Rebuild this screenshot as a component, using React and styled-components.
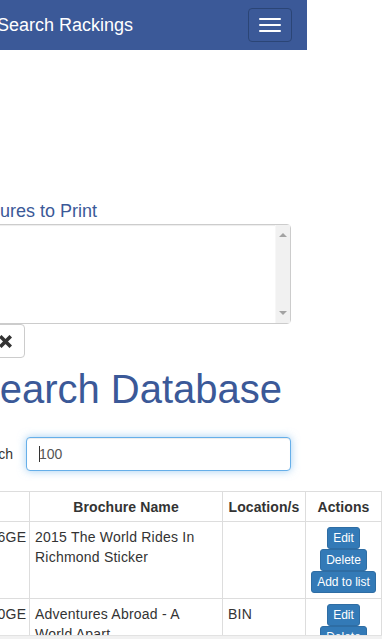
import React from "react";
import styled, { createGlobalStyle } from "styled-components";

const GlobalStyle = createGlobalStyle`
    html, body {
        margin: 0;
        padding: 0;
        overflow: hidden;
        background: #fff;
    }
    body {
        font-family: "Liberation Sans", Arial, sans-serif;
        font-size: 14px;
        line-height: 20px;
        color: #333;
    }
    * {
        box-sizing: border-box;
    }
`;

const Page = styled.div`
    width: 382px;
    height: 639px;
    overflow: hidden;
    position: relative;
`;

const Navbar = styled.nav`
    display: flex;
    align-items: center;
    width: 307px;
    height: 50px;
    background-color: #3b5998;
`;

const Brand = styled.a`
    margin-left: -3px;
    font-size: 18px;
    line-height: 20px;
    color: #fff;
    white-space: nowrap;
`;

const Toggle = styled.button`
    margin-left: auto;
    margin-right: 15px;
    width: 44px;
    height: 34px;
    padding: 0;
    border: 1px solid #2b4576;
    border-radius: 4px;
    background: transparent;
    display: flex;
    flex-direction: column;
    align-items: center;
    justify-content: center;
    gap: 4px;
`;

const Bar = styled.span`
    display: block;
    width: 22px;
    height: 2px;
    border-radius: 1px;
    background: #fff;
`;

const Column = styled.div`
    margin-left: -60px;
    margin-top: 151px;
    width: 351px;
`;

const Label = styled.label`
    display: block;
    margin: 0 0 3px 13px;
    font-size: 18px;
    line-height: 20px;
    color: #3b5998;
    white-space: nowrap;
`;

const TextWrap = styled.div`
    position: relative;
    height: 100px;
`;

const TextArea = styled.textarea`
    display: block;
    width: 100%;
    height: 100px;
    border: 1px solid #ccc;
    border-radius: 4px;
    resize: none;
    overflow: hidden;
    box-shadow: inset 0 1px 1px rgba(0, 0, 0, 0.075);
    font-family: inherit;
`;

const ScrollTrack = styled.div`
    position: absolute;
    top: 1px;
    right: 1px;
    bottom: 1px;
    width: 15px;
    background: #f1f1f1;
    border-left: 1px solid #f7f7f7;
    display: flex;
    flex-direction: column;
    justify-content: space-between;
    align-items: center;
    padding: 8px 0;
`;

const Arrow = styled.span`
    width: 0;
    height: 0;
    border-left: 4px solid transparent;
    border-right: 4px solid transparent;
    ${(p) => (p.down ? "border-top: 4px solid #a3a3a3;" : "border-bottom: 4px solid #a3a3a3;")}
`;

const ClearButton = styled.button`
    display: flex;
    align-items: center;
    justify-content: center;
    margin-left: 46px;
    width: 39px;
    height: 34px;
    padding: 0;
    background: #fff;
    border: 1px solid #ccc;
    border-radius: 4px;
`;

const Heading = styled.h1`
    margin: 9px 0 0 33px;
    font-size: 40px;
    line-height: 44px;
    font-weight: 500;
    color: #3b5998;
    white-space: nowrap;
`;

const SearchRow = styled.div`
    display: flex;
    align-items: center;
    margin: 26px 0 0 28.6px;
`;

const SearchLabel = styled.label`
    margin-right: 13px;
    font-size: 14px;
`;

const InputWrap = styled.div`
    position: relative;
    flex: 1;
`;

const SearchInput = styled.input`
    display: block;
    width: 100%;
    height: 34px;
    padding: 6px 12px;
    font-family: inherit;
    font-size: 14px;
    color: #555;
    border: 1px solid #66afe9;
    border-radius: 4px;
    outline: none;
    box-shadow: inset 0 1px 1px rgba(0, 0, 0, 0.075), 0 0 8px rgba(102, 175, 233, 0.6);
`;

const Caret = styled.span`
    position: absolute;
    left: 13px;
    top: 9px;
    width: 1px;
    height: 16px;
    background: #333;
`;

const TableWrap = styled.div`
    margin: 20px 0 0 -73px;
    width: 454px;
`;

const Table = styled.table`
    width: 100%;
    table-layout: fixed;
    border-collapse: collapse;
    border-spacing: 0;
`;

const Th = styled.th`
    padding: 5px 5px 4px;
    font-weight: bold;
    text-align: center;
    border: 1px solid #ddd;
    white-space: nowrap;
    letter-spacing: 0.1px;
`;

const Td = styled.td`
    padding: 5px;
    vertical-align: top;
    border: 1px solid #ddd;
    letter-spacing: 0.22px;
    white-space: ${(p) => (p.nowrap ? "nowrap" : "normal")};
`;

const Actions = styled.div`
    display: flex;
    flex-direction: column;
    align-items: center;
    letter-spacing: 0;
`;

const SmallButton = styled.button`
    padding: 1px 5px;
    font-family: inherit;
    font-size: 12px;
    line-height: 18px;
    color: #fff;
    background-color: #337ab7;
    border: 1px solid #2e6da4;
    border-radius: 3px;
    white-space: nowrap;
`;

const BottomBar = styled.div`
    position: fixed;
    left: 0;
    right: 0;
    bottom: 0;
    height: 4px;
    background: #f1f1f1;
    border-top: 1px solid #e2e2e2;
`;

const rows = [
    { code: "BRCH0256GE", name: "2015 The World Rides In Richmond Sticker", location: "" },
    { code: "BRCH0100GE", name: "Adventures Abroad - A World Apart", location: "BIN" },
];

const App = () => {
    return (
        <Page>
            <GlobalStyle />
            <Navbar>
                <Brand>Search Rackings</Brand>
                <Toggle>
                    <Bar />
                    <Bar />
                    <Bar />
                </Toggle>
            </Navbar>

            <Column>
                <Label>Brochures to Print</Label>
                <TextWrap>
                    <TextArea />
                    <ScrollTrack>
                        <Arrow />
                        <Arrow down />
                    </ScrollTrack>
                </TextWrap>
                <ClearButton>
                    <svg width="13" height="13" viewBox="0 0 13 13">
                        <path d="M2.5 2.5 L10.5 10.5 M10.5 2.5 L2.5 10.5" stroke="#333" strokeWidth="3.6" strokeLinecap="square" />
                    </svg>
                </ClearButton>

                <Heading>Search Database</Heading>

                <SearchRow>
                    <SearchLabel>Search</SearchLabel>
                    <InputWrap>
                        <SearchInput defaultValue="100" />
                        <Caret />
                    </InputWrap>
                </SearchRow>
            </Column>

            <TableWrap>
                <Table>
                    <colgroup>
                        <col style={{ width: 102 }} />
                        <col style={{ width: 193 }} />
                        <col style={{ width: 83 }} />
                        <col style={{ width: 76 }} />
                    </colgroup>
                    <thead>
                        <tr>
                            <Th>Code</Th>
                            <Th>Brochure Name</Th>
                            <Th>Location/s</Th>
                            <Th>Actions</Th>
                        </tr>
                    </thead>
                    <tbody>
                        {rows.map((r) => (
                            <tr key={r.code}>
                                <Td nowrap>{r.code}</Td>
                                <Td>{r.name}</Td>
                                <Td>{r.location}</Td>
                                <Td>
                                    <Actions>
                                        <SmallButton>Edit</SmallButton>
                                        <SmallButton>Delete</SmallButton>
                                        <SmallButton>Add to list</SmallButton>
                                    </Actions>
                                </Td>
                            </tr>
                        ))}
                    </tbody>
                </Table>
            </TableWrap>
            <BottomBar />
        </Page>
    );
};

export default App;
